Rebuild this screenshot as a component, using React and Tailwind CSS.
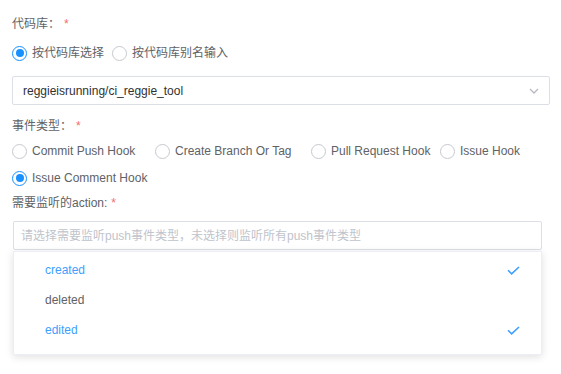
import React from 'react';

const Radio = ({ checked, label }) => (
  <label className="flex items-center gap-[5px] text-[12px] text-[#606266]">
    <span
      className={`flex h-[15px] w-[15px] items-center justify-center rounded-full border ${
        checked ? 'border-[#1890ff]' : 'border-[#c6c9cf]'
      } bg-white`}
    >
      {checked && <span className="h-[8px] w-[8px] rounded-full bg-[#1890ff]" />}
    </span>
    <span>{label}</span>
  </label>
);

const Check = () => (
  <svg width="13" height="9" viewBox="0 0 13 9" fill="none">
    <path d="M1 4.2l3.6 3.6L12 1" stroke="#409eff" strokeWidth="1.6" />
  </svg>
);

const App = () => {
  const options = [
    { name: 'created', selected: true },
    { name: 'deleted', selected: false },
    { name: 'edited', selected: true },
  ];

  return (
    <div
      className="h-[374px] w-[561px] bg-white pl-[12px] pt-[1px] text-[#606266]"
      style={{ fontFamily: '"Liberation Sans", "Noto Sans CJK SC", sans-serif' }}
    >
      {/* 代码库 */}
      <div className="flex h-[44px] items-center pt-[1px] text-[12px]">
        代码库：<span className="ml-[4px] text-[#f56c6c]">*</span>
      </div>
      <div className="flex h-[16px] items-center gap-[8px]">
        <Radio checked label="按代码库选择" />
        <Radio label="按代码库别名输入" />
      </div>
      <div className="mt-[15px] flex h-[29px] w-[538px] items-center justify-between rounded-[2px] border border-[#dcdfe6] pl-[10px] pr-[10px] text-[12px] text-[#303133]">
        <span>reggieisrunning/ci_reggie_tool</span>
        <svg width="10" height="6" viewBox="0 0 10 6" fill="none">
          <path d="M1 1l4 4 4-4" stroke="#b4b8bf" strokeWidth="1.3" />
        </svg>
      </div>

      {/* 事件类型 */}
      <div className="flex h-[38px] items-center pt-[3px] text-[12px]">
        事件类型：<span className="ml-[4px] text-[#f56c6c]">*</span>
      </div>
      <div className="flex h-[16px] items-center">
        <div className="w-[143px]"><Radio label="Commit Push Hook" /></div>
        <div className="w-[156px]"><Radio label="Create Branch Or Tag" /></div>
        <div className="w-[129px]"><Radio label="Pull Request Hook" /></div>
        <Radio label="Issue Hook" />
      </div>
      <div className="mt-[11px] flex h-[16px] items-center">
        <Radio checked label="Issue Comment Hook" />
      </div>

      {/* action */}
      <div className="flex h-[34px] items-center text-[12px]">
        需要监听的action:<span className="ml-[4px] text-[#f56c6c]">*</span>
      </div>
      <div className="ml-[1px] mt-[1px] w-[529px]">
        <div className="flex h-[29px] items-center rounded-[2px] border border-[#dcdfe6] px-[7px] text-[12px] text-[#c0c4cc]">
          请选择需要监听push事件类型，未选择则监听所有push事件类型
        </div>
        <div className="mt-[1px] border border-[#ebeef5] bg-white pb-[9px] pt-[3px] shadow-[0_2px_8px_rgba(0,0,0,0.12)]">
          {options.map((o) => (
            <div
              key={o.name}
              className={`flex h-[30px] items-center justify-between pl-[31px] pr-[21px] text-[12px] ${
                o.selected ? 'text-[#409eff]' : 'text-[#606266]'
              }`}
            >
              <span>{o.name}</span>
              {o.selected && <Check />}
            </div>
          ))}
        </div>
      </div>
    </div>
  );
};

export default App;
